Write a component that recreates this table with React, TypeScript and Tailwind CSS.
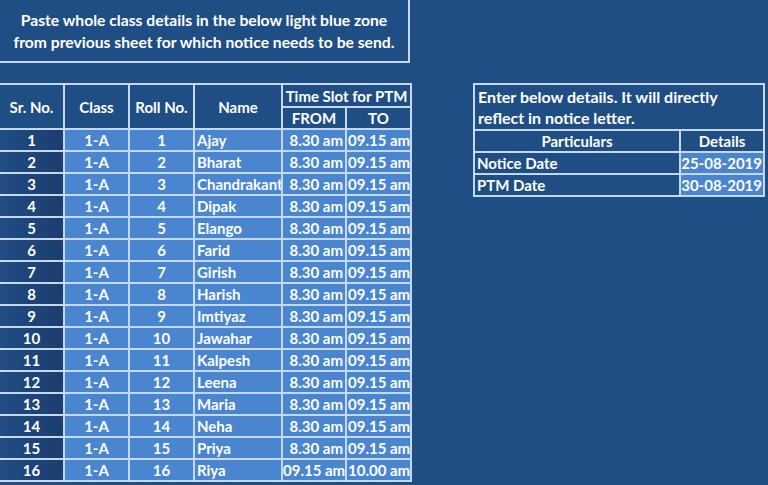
const students = [
    'Ajay', 'Bharat', 'Chandrakant', 'Dipak', 'Elango', 'Farid', 'Girish', 'Harish',
    'Imtiyaz', 'Jawahar', 'Kalpesh', 'Leena', 'Maria', 'Neha', 'Priya', 'Riya',
]

const line = 'border-2 border-[#c6d8ef]'

export default function App() {
    return (
        <div className="h-[485px] w-full overflow-hidden bg-[#1f4e85] font-['Lato','Liberation_Sans',sans-serif] font-bold text-white">
            <div className="flex flex-row">
                <div className="w-[410px] flex-none">
                    <div className="flex h-[63px] flex-col items-center justify-center border-r-2 border-b-2 border-[#c6d8ef] pt-[1px] text-[15.7px] leading-[22px]">
                        <div>Paste whole class details in the below light blue zone</div>
                        <div>from previous sheet for which notice needs to be send.</div>
                    </div>
                    <table className="mt-[20px] ml-[-2px] w-[412px] table-fixed border-collapse text-[15px] leading-[18px]">
                        <colgroup>
                            <col className="w-[65px]" />
                            <col className="w-[65px]" />
                            <col className="w-[65px]" />
                            <col className="w-[88px]" />
                            <col className="w-[64px]" />
                            <col className="w-[65px]" />
                        </colgroup>
                        <thead>
                            <tr className="h-[23px]">
                                <th rowSpan={2} className={`${line} text-center`}>Sr. No.</th>
                                <th rowSpan={2} className={`${line} text-center`}>Class</th>
                                <th rowSpan={2} className={`${line} text-center`}>Roll No.</th>
                                <th rowSpan={2} className={`${line} text-center`}>Name</th>
                                <th colSpan={2} className={`${line} text-center`}>Time Slot for PTM</th>
                            </tr>
                            <tr className="h-[22px]">
                                <th className={`${line} text-center`}>FROM</th>
                                <th className={`${line} text-center`}>TO</th>
                            </tr>
                        </thead>
                        <tbody>
                            {students.map((name, i) => {
                                const late = i >= 15
                                return (
                                    <tr key={name} className="h-[22px]">
                                        <td className={`${line} bg-gradient-to-r from-[#214c84] to-[#1a3e6f] text-center`}>{i + 1}</td>
                                        <td className={`${line} bg-[#4a86cf] text-center`}>1-A</td>
                                        <td className={`${line} bg-[#4a86cf] text-center`}>{i + 1}</td>
                                        <td className={`${line} overflow-hidden bg-[#4a86cf] pl-[2px] text-left whitespace-nowrap`}>{name}</td>
                                        <td className={`${line} overflow-hidden bg-[#4a86cf] pr-[2px] text-right whitespace-nowrap`}>{late ? '09.15 am' : '8.30 am'}</td>
                                        <td className={`${line} overflow-hidden bg-[#4a86cf] pl-[1px] text-left whitespace-nowrap`}>{late ? '10.00 am' : '09.15 am'}</td>
                                    </tr>
                                )
                            })}
                        </tbody>
                    </table>
                </div>
                <div className="mt-[83px] ml-[63px] w-[290px] flex-none">
                    <table className="w-full table-fixed border-collapse text-[15px] leading-[18px]">
                        <colgroup>
                            <col className="w-[206px]" />
                            <col className="w-[84px]" />
                        </colgroup>
                        <tbody>
                            <tr className="h-[46px]">
                                <td colSpan={2} className={`${line} px-[3px] text-left text-[16px] leading-[21px]`}>
                                    Enter below details. It will directly
                                    <br />
                                    reflect in notice letter.
                                </td>
                            </tr>
                            <tr className="h-[22px]">
                                <td className={`${line} text-center`}>Particulars</td>
                                <td className={`${line} text-center`}>Details</td>
                            </tr>
                            <tr className="h-[22px]">
                                <td className={`${line} pl-[2px] text-left`}>Notice Date</td>
                                <td className={`${line} bg-[#4a86cf] pr-[1px] text-right`}>25-08-2019</td>
                            </tr>
                            <tr className="h-[22px]">
                                <td className={`${line} pl-[2px] text-left`}>PTM Date</td>
                                <td className={`${line} bg-[#4a86cf] pr-[1px] text-right`}>30-08-2019</td>
                            </tr>
                        </tbody>
                    </table>
                </div>
            </div>
        </div>
    )
}
